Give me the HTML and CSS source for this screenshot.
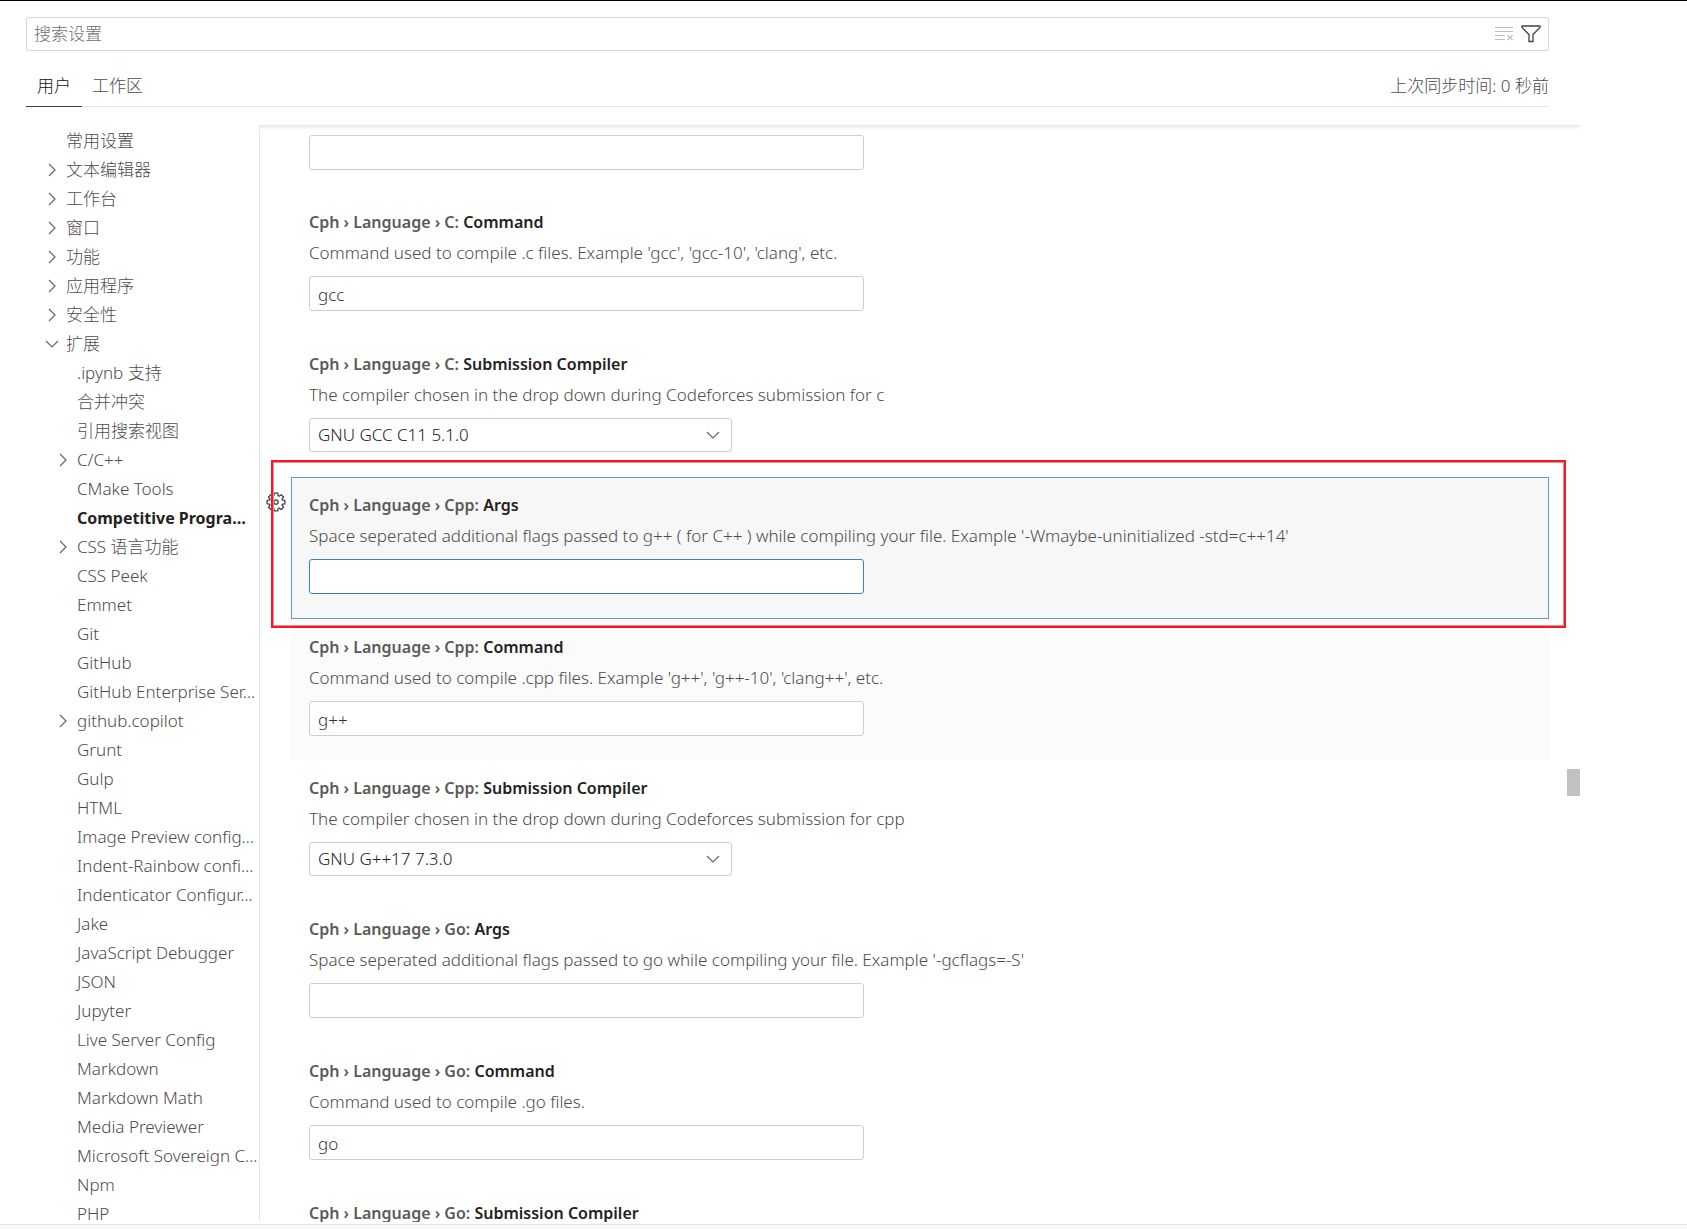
FILE: index.html
```html
<!DOCTYPE html>
<html lang="zh-CN">
<head>
<meta charset="utf-8">
<meta name="viewport" content="width=device-width, initial-scale=1">
<title>设置</title>
<link rel="stylesheet" href="styles.css">
</head>
<body>
<svg class="defs" aria-hidden="true">
  <symbol id="right" viewBox="0 0 20 20"><path d="M7 4l6 6-6 6" fill="none" stroke="currentColor" stroke-width="1.2"/></symbol>
  <symbol id="down" viewBox="0 0 20 20"><path d="M4 7l6 6 6-6" fill="none" stroke="currentColor" stroke-width="1.2"/></symbol>
</svg>
<div class="editor">
  <header class="header">
    <div class="search">
      <input class="search-input" type="text" placeholder="搜索设置" aria-label="搜索设置">
      <button class="icon-button is-disabled" type="button" aria-label="清除设置搜索输入">
        <svg width="20" height="20" viewBox="0 0 20 20" fill="none" stroke="currentColor" stroke-width="1.2"><path d="M1 3.500h18M1 7.500h18M1 11.500h10M1 15.500h10M13.500 11l5 5M18.500 11l-5 5"/></svg>
      </button>
      <button class="icon-button" type="button" aria-label="筛选设置">
        <svg width="20" height="20" viewBox="0 0 20 20" fill="none" stroke="currentColor" stroke-width="1.300"><path d="M1 2h18v1.500l-7 7V17.500H8v-7l-7-7z"/></svg>
      </button>
    </div>
    <nav class="tabs">
      <button class="tab is-active" type="button">用户</button>
      <button class="tab" type="button">工作区</button>
      <span class="sync">上次同步时间: 0 秒前</span>
    </nav>
  </header>
  <main class="main">
    <nav class="tree">
      <a class="row no-icon" href="#">常用设置</a>
      <a class="row" href="#"><svg class="icon"><use href="#right"/></svg>文本编辑器</a>
      <a class="row" href="#"><svg class="icon"><use href="#right"/></svg>工作台</a>
      <a class="row" href="#"><svg class="icon"><use href="#right"/></svg>窗口</a>
      <a class="row" href="#"><svg class="icon"><use href="#right"/></svg>功能</a>
      <a class="row" href="#"><svg class="icon"><use href="#right"/></svg>应用程序</a>
      <a class="row" href="#"><svg class="icon"><use href="#right"/></svg>安全性</a>
      <a class="row" href="#"><svg class="icon"><use href="#down"/></svg>扩展</a>
      <div class="subtree">
        <a class="row no-icon" href="#">.ipynb 支持</a>
        <a class="row no-icon" href="#">合并冲突</a>
        <a class="row no-icon" href="#">引用搜索视图</a>
        <a class="row" href="#"><svg class="icon"><use href="#right"/></svg>C/C++</a>
        <a class="row no-icon" href="#">CMake Tools</a>
        <a class="row no-icon is-selected" href="#">Competitive Progra…</a>
        <a class="row" href="#"><svg class="icon"><use href="#right"/></svg>CSS 语言功能</a>
        <a class="row no-icon" href="#">CSS Peek</a>
        <a class="row no-icon" href="#">Emmet</a>
        <a class="row no-icon" href="#">Git</a>
        <a class="row no-icon" href="#">GitHub</a>
        <a class="row no-icon" href="#">GitHub Enterprise Ser…</a>
        <a class="row" href="#"><svg class="icon"><use href="#right"/></svg>github.copilot</a>
        <a class="row no-icon" href="#">Grunt</a>
        <a class="row no-icon" href="#">Gulp</a>
        <a class="row no-icon" href="#">HTML</a>
        <a class="row no-icon" href="#">Image Preview config…</a>
        <a class="row no-icon" href="#">Indent-Rainbow confi…</a>
        <a class="row no-icon" href="#">Indenticator Configur…</a>
        <a class="row no-icon" href="#">Jake</a>
        <a class="row no-icon" href="#">JavaScript Debugger</a>
        <a class="row no-icon" href="#">JSON</a>
        <a class="row no-icon" href="#">Jupyter</a>
        <a class="row no-icon" href="#">Live Server Config</a>
        <a class="row no-icon" href="#">Markdown</a>
        <a class="row no-icon" href="#">Markdown Math</a>
        <a class="row no-icon" href="#">Media Previewer</a>
        <a class="row no-icon" href="#">Microsoft Sovereign C…</a>
        <a class="row no-icon" href="#">Npm</a>
        <a class="row no-icon" href="#">PHP</a>
      </div>
    </nav>
    <div class="content">
      <div class="list">
        <section class="item is-cut">
          <input class="field" type="text" aria-label="Cph › Language › C: Args">
        </section>
        <section class="item">
          <label class="title" for="c-command">Cph › Language › C: <b>Command</b></label>
          <p class="desc">Command used to compile .c files. Example 'gcc', 'gcc-10', 'clang', etc.</p>
          <input class="field" id="c-command" type="text" value="gcc">
        </section>
        <section class="item">
          <label class="title" for="c-compiler">Cph › Language › C: <b>Submission Compiler</b></label>
          <p class="desc">The compiler chosen in the drop down during Codeforces submission for c</p>
          <div class="dropdown">
            <select class="select" id="c-compiler"><option>GNU GCC C11 5.1.0</option></select>
            <svg class="icon"><use href="#down"/></svg>
          </div>
        </section>
        <section class="item is-focused">
          <button class="gear" type="button" aria-label="更多操作">
            <svg width="20" height="20" viewBox="0 0 20 20" fill="none" stroke="currentColor" stroke-width="1.300" stroke-linejoin="round"><path d="M8.200 1.200h3.600l.3 2.500 1 .5 2.100-1.500 2.300 2.300-1.500 2.100.5 1 2.400.3v3.400l-2.400.3-.5 1 1.500 2.100-2.300 2.300-2.100-1.500-1 .5-.3 2.400H8.200l-.3-2.400-1-.5-2.100 1.500-2.300-2.300L4 13.100l-.5-1-2.400-.3V8.400l2.400-.3.500-1L2.500 5l2.300-2.300 2.100 1.500 1-.5z"/><circle cx="10" cy="10" r="2.200"/></svg>
          </button>
          <label class="title" for="cpp-args">Cph › Language › Cpp: <b>Args</b></label>
          <p class="desc">Space seperated additional flags passed to g++ ( for C++ ) while compiling your file. Example '-Wmaybe-uninitialized -std=c++14'</p>
          <input class="field" id="cpp-args" type="text">
          <div class="highlight"></div>
        </section>
        <section class="item is-hovered">
          <label class="title" for="cpp-command">Cph › Language › Cpp: <b>Command</b></label>
          <p class="desc">Command used to compile .cpp files. Example 'g++', 'g++-10', 'clang++', etc.</p>
          <input class="field" id="cpp-command" type="text" value="g++">
        </section>
        <section class="item">
          <label class="title" for="cpp-compiler">Cph › Language › Cpp: <b>Submission Compiler</b></label>
          <p class="desc">The compiler chosen in the drop down during Codeforces submission for cpp</p>
          <div class="dropdown">
            <select class="select" id="cpp-compiler"><option>GNU G++17 7.3.0</option></select>
            <svg class="icon"><use href="#down"/></svg>
          </div>
        </section>
        <section class="item">
          <label class="title" for="go-args">Cph › Language › Go: <b>Args</b></label>
          <p class="desc">Space seperated additional flags passed to go while compiling your file. Example '-gcflags=-S'</p>
          <input class="field" id="go-args" type="text">
        </section>
        <section class="item">
          <label class="title" for="go-command">Cph › Language › Go: <b>Command</b></label>
          <p class="desc">Command used to compile .go files.</p>
          <input class="field" id="go-command" type="text" value="go">
        </section>
        <section class="item">
          <span class="title">Cph › Language › Go: <b>Submission Compiler</b></span>
        </section>
      </div>
      <div class="shadow"></div>
      <div class="thumb"></div>
    </div>
  </main>
  <footer class="panel-edge"></footer>
</div>
</body>
</html>
```
FILE: styles.css
```css
* {
  box-sizing: border-box;
}

body {
  margin: 0;
  background: #fff;
  color: #4c4c4c;
  font-family: "Noto Sans", "Noto Sans CJK SC", sans-serif;
  font-size: 17px;
  font-weight: 300;
  line-height: 24px;
}

button,
input,
select {
  font: inherit;
  color: inherit;
}

button {
  padding: 0;
  border: 0;
  background: none;
}

.defs {
  display: none;
}

.icon {
  flex: none;
  width: 20px;
  height: 20px;
  color: #666;
}

.editor {
  display: flex;
  flex-direction: column;
  height: 100vh;
  overflow: hidden;
  border-top: 1px solid #000;
}

.header {
  flex: none;
  padding: 16px 138px 0 26px;
}

.search {
  display: flex;
  align-items: center;
  gap: 7px;
  height: 34px;
  padding: 0 7px;
  border: 1px solid #d8d8d8;
  border-radius: 2px;
}

.search-input {
  flex: 1;
  min-width: 0;
  padding: 0;
  border: 0;
  outline: 0;
}

.search-input::placeholder {
  color: #707070;
  opacity: 1;
}

.icon-button {
  display: flex;
  color: #424242;
}

.icon-button.is-disabled {
  color: #bdbdbd;
}

.tabs {
  display: flex;
  height: 42px;
  margin-top: 14px;
  border-bottom: 1px solid #e7e7e7;
}

.tab {
  height: 42px;
  padding: 0 10px;
}

.tab.is-active {
  padding: 0 11px;
  border-bottom: 1px solid #424242;
  color: #111;
}

.sync {
  margin-left: auto;
  line-height: 42px;
}

.main {
  flex: 1;
  display: flex;
  min-height: 0;
  margin: 18px 107px 2px 0;
}

.tree {
  flex: none;
  width: 260px;
  padding: 1px 0 0 42px;
  overflow: hidden;
  border-right: 1px solid #e5e5e5;
}

.subtree {
  padding-left: 11px;
}

.row {
  display: flex;
  align-items: center;
  gap: 4px;
  height: 29px;
  color: inherit;
  text-decoration: none;
  white-space: nowrap;
}

.row.no-icon {
  padding-left: 24px;
}

.row.is-selected {
  color: #222;
  font-size: 16px;
  font-weight: 700;
}

.content {
  position: relative;
  flex: 1;
  min-width: 0;
  overflow: hidden;
}

.list {
  padding: 0 31px;
}

/* Drop shadow that the fixed header casts on the scrolled list */
.shadow {
  position: absolute;
  inset: 0 0 auto;
  height: 5px;
  background: linear-gradient(#e8e8e8, #fff);
}

.thumb {
  position: absolute;
  top: 644px;
  right: 0;
  width: 13px;
  height: 27px;
  background: #c1c1c1;
}

.item {
  position: relative;
  padding: 16px 18px 25px;
}

.item.is-cut {
  padding: 10px 18px 24px;
}

.item.is-hovered {
  padding-bottom: 24px;
  background: #fbfbfb;
}

.item.is-focused {
  background: #f7f7f7;
  box-shadow: inset 0 0 0 1px #5a9bd8;
}

.title {
  display: block;
  color: #5a5a5a;
  font-size: 16px;
  font-weight: 600;
}

.title b {
  color: #222;
  font-weight: 600;
}

.desc {
  margin: 7px 0 11px;
}

.field {
  display: block;
  width: 100%;
  max-width: 555px;
  height: 35px;
  padding: 2px 8px 0;
  border: 1px solid #cecece;
  border-radius: 3px;
  background: #fff;
  color: #333;
}

.is-focused .field {
  border-color: #3a82c8;
}

.dropdown {
  display: grid;
  align-items: center;
  width: 100%;
  max-width: 423px;
}

.dropdown > * {
  grid-area: 1 / 1;
}

.dropdown .icon {
  justify-self: end;
  margin-right: 9px;
  pointer-events: none;
}

.select {
  appearance: none;
  height: 34px;
  padding: 0 8px;
  border: 1px solid #cecece;
  border-radius: 3px;
  background: #fff;
  color: #222;
}

.gear {
  position: absolute;
  top: 15px;
  left: -25px;
  display: flex;
  color: #424242;
}

/* Red callout frame drawn around the focused setting */
.highlight {
  position: absolute;
  inset: -17px -17px -9px -20px;
  z-index: 1;
  border: 2px solid #ed1c24;
  box-shadow: inset 0 0 0 1px #f48a8e;
  pointer-events: none;
}

.panel-edge {
  flex: none;
  height: 5px;
  border-top: 1px solid #e5e5e5;
  background: #f8f8f8;
}
```
